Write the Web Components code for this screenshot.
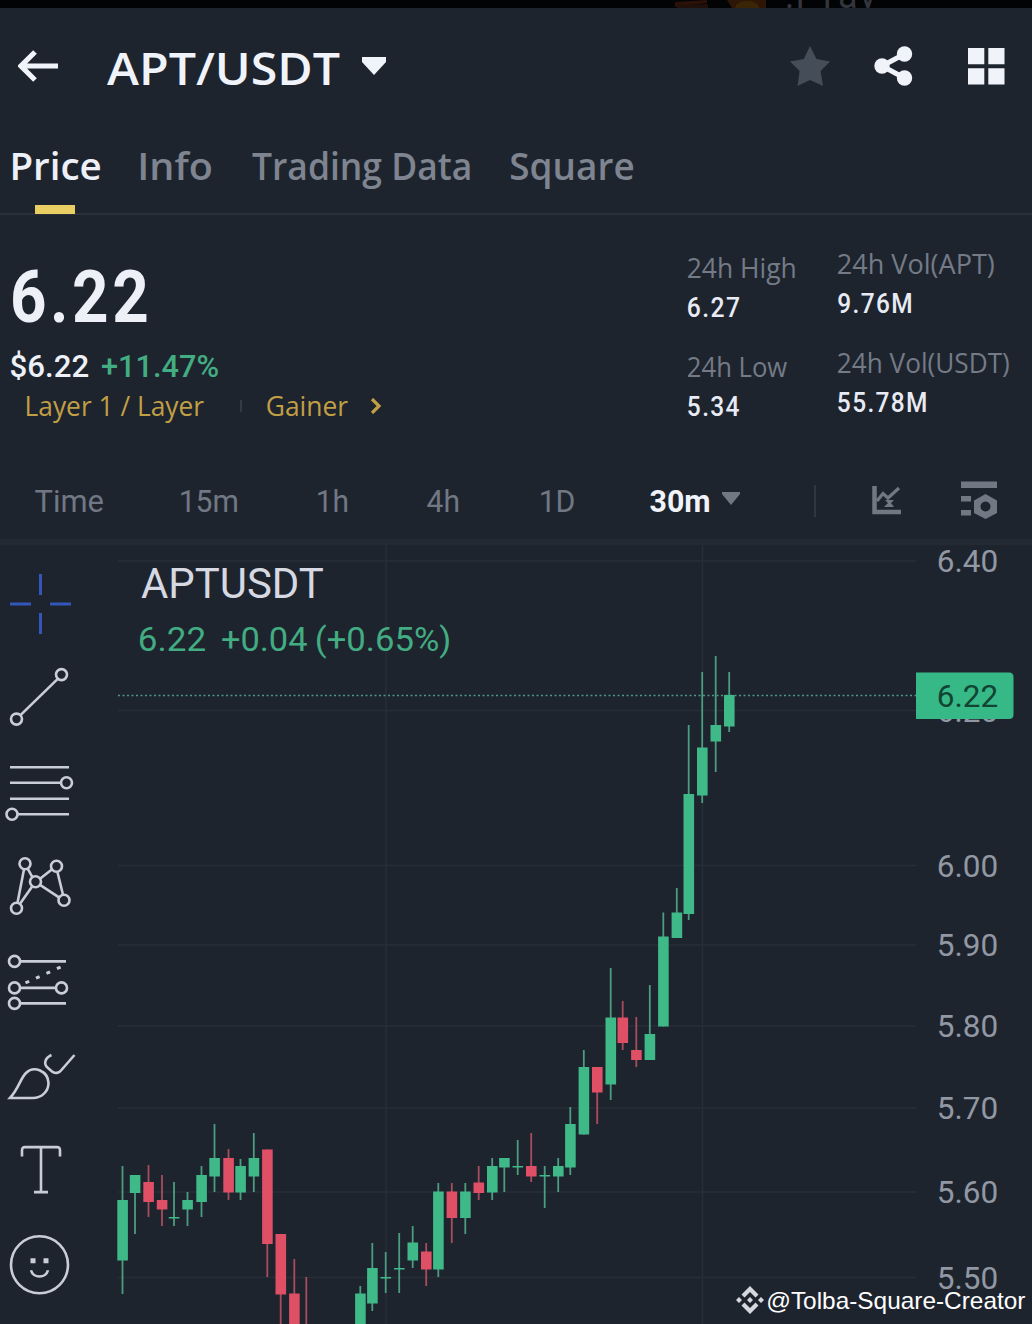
<!DOCTYPE html>
<html lang="en">
<head>
<meta charset="utf-8">
<title>APT/USDT</title>
<style>
body {
  margin: 0;
  background: #1e242e;
}
</style>
</head>
<body>
<market-page></market-page>

<script>
const measure = document.createElement('canvas').getContext('2d');

// Text whose drawn glyphs span exactly `width` pixels.
class FitText extends HTMLElement {
  constructor() {
    super();
    this.root = this.attachShadow({ mode: 'open' });
    this.root.innerHTML = `<style>
    :host { display: flex; flex: none; }
    span { flex: none; white-space: nowrap; transform-origin: 0 50%; }
    </style><span><slot></slot></span>`;
  }

  connectedCallback() {
    const width = Number(this.getAttribute('width'));
    const style = getComputedStyle(this);
    // Measured at ten times the size, since glyph bounds come back in whole pixels.
    measure.font = `${style.fontWeight} ${parseFloat(style.fontSize) * 10}px ${style.fontFamily}`;
    measure.letterSpacing = (parseFloat(style.letterSpacing) || 0) * 10 + 'px';
    const box = measure.measureText(this.textContent);
    const left = box.actualBoundingBoxLeft / 10;
    const scale = width / (left + box.actualBoundingBoxRight / 10);
    this.style.width = width + 'px';
    this.root.querySelector('span').style.transform = `translateX(${left * scale}px) scaleX(${scale})`;
  }
}

class StatusStrip extends HTMLElement {
  constructor() {
    super();
    this.attachShadow({ mode: 'open' }).innerHTML = `
    <style>
    :host { display: flex; height: 8px; overflow: hidden; background: #020305; color: #33363c;
      font: 36px/40px Roboto, sans-serif; letter-spacing: 2px; }
    svg { flex: none; margin-left: 672px; width: 98px; height: 8px; }
    .text { margin: -24px 0 0 15px; display: flex; gap: 10px; }
    </style>
    <svg viewBox="0 0 98 8">
      <path d="M3 2L35 0V3L3 7z" fill="#2b1108"/><path d="M5 8V5L36 4V8z" fill="#211009"/>
      <path d="M55 0H94V8H60z" fill="#2d1605"/><ellipse cx="75" cy="8" rx="12" ry="7" fill="#3a2507"/>
    </svg>
    <div class="text"><span>:l</span><span>Tay</span></div>`;
  }
}

class MarketHeader extends HTMLElement {
  constructor() {
    super();
    this.attachShadow({ mode: 'open' }).innerHTML = `
    <style>
    :host { display: flex; align-items: center; height: 116px; padding: 0 27px 0 18px; color: #f1f3fb;
      font: 600 46px/60px "Open Sans", sans-serif; }
    svg { flex: none; display: block; fill: currentColor; }
    fit-text { margin: 1px 21px 0 49px; }
    .star { margin-left: auto; color: #454d58; }
    .share { margin: 0 55px 0 44px; }
    </style>
    <svg width="40" height="32" viewBox="0 0 40 32"><path d="M17 2L3 16L17 30M3 16H40" fill="none" stroke="currentColor" stroke-width="5.2"/></svg>
    <fit-text width="233">APT/USDT</fit-text>
    <svg width="26" height="20" viewBox="0 0 26 20"><path d="M1 1H25V6L13 19L1 6z"/></svg>
    <svg class="star" width="40" height="42" viewBox="0 0 40 42"><path d="M20 1L26.5 14L40 16.4L30.6 26L33 41L20 35L7.5 41L9.6 26L0 16.4L13.8 14z"/></svg>
    <svg class="share" width="39" height="42" viewBox="0 0 39 42">
      <circle cx="8" cy="21" r="7.7"/><circle cx="30.5" cy="9" r="7.7"/><circle cx="30.5" cy="33" r="7.7"/>
      <path d="M30.5 9L8 21L30.5 33" fill="none" stroke="currentColor" stroke-width="5"/>
    </svg>
    <svg width="37" height="37" viewBox="0 0 37 37"><path d="M0 0H16.3V16.3H0zM20.3 0H36.5V16.3H20.3zM0 20.3H16.3V36.5H0zM20.3 20.3H36.5V36.5H20.3z"/></svg>`;
  }
}

class MarketTabs extends HTMLElement {
  constructor() {
    super();
    this.attachShadow({ mode: 'open' }).innerHTML = `
    <style>
    :host { display: flex; gap: 41px; height: 89px; padding-left: 13px; border-bottom: 2px solid #29303a;
      color: #7e8590; font: 600 37.5px/83px "Open Sans", sans-serif; }
    .active { color: #eef0f8; }
    .active i { display: block; width: 40px; height: 9px; margin: -2px 0 0 22px; background: #e9cf63; }
    </style>
    <div class="active"><fit-text width="87">Price</fit-text><i></i></div>
    <fit-text width="70">Info</fit-text>
    <fit-text width="218">Trading Data</fit-text>
    <fit-text width="122">Square</fit-text>`;
  }
}

class MarketStat extends HTMLElement {
  constructor() {
    super();
    this.attachShadow({ mode: 'open' }).innerHTML = `
    <style>
    :host { display: block; color: #747b87; font: 400 27px/40px "Open Sans", sans-serif; }
    ::slotted([slot=value]) { margin-top: 1px; color: #e8ebf3; font: 500 27px/38px Roboto, sans-serif; letter-spacing: 1.5px; }
    </style>
    <slot></slot><slot name="value"></slot>`;
  }
}

class PriceSummary extends HTMLElement {
  constructor() {
    super();
    this.attachShadow({ mode: 'open' }).innerHTML = `
    <style>
    :host { display: flex; justify-content: space-between; height: 248px; color: #eef0f8;
      font: 500 31px/38px Roboto, sans-serif; }
    .left { padding: 45px 0 0 11px; }
    .price { margin: 0 0 14px 2px; font-size: 73px; line-height: 74px; font-weight: 700; letter-spacing: 4px; }
    .row { display: flex; align-items: center; }
    .change { margin-left: 14px; color: #42ac82; }
    .tags { padding-left: 16px; color: #c19f45; font: 400 27px/40px "Open Sans", sans-serif; }
    .tags i { width: 2px; height: 12px; margin: 0 25px 0 36px; background: #343b46; }
    svg { margin: 0 0 0 22px; }
    .stats { display: flex; width: 344px; padding-top: 29px; }
    .col { display: grid; gap: 20px; align-content: start; width: 150px; padding-top: 4px; }
    .col + .col { padding-top: 0; }
    </style>
    <div class="left">
      <fit-text class="price" width="134">6.22</fit-text>
      <div class="row">
        <fit-text width="77">$6.22</fit-text>
        <fit-text class="change" width="116">+11.47%</fit-text>
      </div>
      <div class="row tags">
        <fit-text width="177">Layer 1 / Layer</fit-text><i></i>
        <fit-text width="81">Gainer</fit-text>
        <svg width="12" height="16" viewBox="0 0 12 16"><path d="M2 1L9 8L2 15" fill="none" stroke="currentColor" stroke-width="3.2"/></svg>
      </div>
    </div>
    <div class="stats">
      <div class="col">
        <market-stat><fit-text width="107">24h High</fit-text><fit-text slot="value" width="51">6.27</fit-text></market-stat>
        <market-stat><fit-text width="99">24h Low</fit-text><fit-text slot="value" width="51">5.34</fit-text></market-stat>
      </div>
      <div class="col">
        <market-stat><fit-text width="156">24h Vol(APT)</fit-text><fit-text slot="value" width="73">9.76M</fit-text></market-stat>
        <market-stat><fit-text width="171">24h Vol(USDT)</fit-text><fit-text slot="value" width="88">55.78M</fit-text></market-stat>
      </div>
    </div>`;
  }
}

class IntervalBar extends HTMLElement {
  constructor() {
    super();
    this.attachShadow({ mode: 'open' }).innerHTML = `
    <style>
    :host { display: flex; align-items: center; height: 76px; padding-left: 35px; color: #717884;
      border-bottom: 6px solid #232a34; font: 400 31px/76px Roboto, sans-serif; }
    fit-text { margin-top: 2px; }
    .active { color: #f1f3fa; font-weight: 700; margin-left: 76px; }
    svg { flex: none; fill: currentColor; }
    i { width: 2px; height: 32px; margin: 0 56px 0 74px; background: #303741; }
    </style>
    <fit-text width="68">Time</fit-text>
    <fit-text width="56" style="margin-left: 78px">15m</fit-text>
    <fit-text width="29" style="margin-left: 81px">1h</fit-text>
    <fit-text width="31" style="margin-left: 80px">4h</fit-text>
    <fit-text width="33" style="margin-left: 83px">1D</fit-text>
    <fit-text class="active" width="59">30m</fit-text>
    <svg width="18" height="13" viewBox="0 0 18 13" style="margin: -5px 0 0 13px"><path d="M0 0H18V2L9 13L0 2z"/></svg>
    <i></i>
    <svg width="30" height="30" viewBox="0 0 30 30">
      <path d="M2.5 0V26H29" fill="none" stroke="currentColor" stroke-width="4.5"/>
      <path d="M5 15L11 7.500L16 12L27 2" fill="none" stroke="currentColor" stroke-width="3.2"/>
      <path d="M13 14H22L19 17L22 21H12L16 17z"/>
    </svg>
    <svg width="38" height="40" viewBox="0 0 38 40" style="margin: -2px 0 0 58px">
      <path d="M1 1.500H37V8H1zM1 16H11V21.500H1zM1 30H11V35.500H1z"/>
      <path fill-rule="evenodd" d="M25.500 14L37 20.500V33L25.500 39L14 33V20.500zM25.500 21.500a5 5 0 1 0 .01 0z"/>
    </svg>`;
  }
}

// Each tool is 94.4px high; the drawings share one coordinate column.
const TOOLS = [
  '<path stroke="#3357b8" stroke-width="3" d="M40.500 574V595M40.500 613V634M10 604H31M50 604H71"/>',
  '<path d="M20.500 715.500L58 679"/><circle cx="61.500" cy="675" r="5.500"/><circle cx="16.500" cy="719.500" r="5.500"/>',
  '<path d="M10 767H69M10 782.500H61M10 798.500H69M17 814H69"/><circle cx="66.500" cy="782.500" r="5.500"/><circle cx="12" cy="814" r="5.500"/>',
  '<path d="M24 869.500L17.500 903M27.500 868.500L32.500 877.500M40 879L51.500 870M40 885L59 897.500M57.500 872.500L63 895M32 887L20 904"/><circle cx="25" cy="864" r="5.500"/><circle cx="56.500" cy="866.500" r="5.500"/><circle cx="35.500" cy="882" r="5.500"/><circle cx="64" cy="900.500" r="5.500"/><circle cx="16.500" cy="908.500" r="5.500"/>',
  '<path d="M20 961H66M20 987.500H55M20 1003H66"/><circle cx="14.500" cy="961" r="5.500"/><circle cx="14.500" cy="987.500" r="5.500"/><circle cx="61.500" cy="987.500" r="5.500"/><circle cx="14.500" cy="1003" r="5.500"/><path stroke-width="3" stroke-dasharray="4 7.500" d="M25.500 982.500L62 966"/>',
  '<path d="M10 1098C19 1088 20 1079 26 1073C34 1065 48 1071 48.500 1083C48.500 1092 41 1098 33 1098zM51.500 1055C45 1058 43 1064 48 1068L52 1071.500C55 1074 59 1073 61 1070.500L74.500 1055"/>',
  '<path d="M22 1157V1151C22 1148 23 1147.500 25 1147.500H57C59 1147.500 60 1148 60 1151V1157M41 1148V1192M34 1192.500H48"/>',
  '<circle cx="39.500" cy="1264.500" r="28.500"/><path d="M31 1270C33 1278.500 46 1278.500 48 1270"/><path stroke="none" fill="currentColor" d="M30.500 1258h5v5h-5zM43.500 1258h5v5h-5z"/>'
];

class DrawTools extends HTMLElement {
  constructor() {
    super();
    this.attachShadow({ mode: 'open' }).innerHTML = `
    <style>
    :host { display: flex; flex-direction: column; flex: none; width: 110px; padding-top: 12px; color: #c9cdd7; }
    svg { flex: none; width: 84px; height: 94.4px; overflow: visible; fill: none; stroke: currentColor; stroke-width: 2.6; }
    </style>
    ${TOOLS.map((art, i) => `<svg viewBox="0 ${557 + i * 94.4} 84 94.4">${art}</svg>`).join('')}`;
  }
}

// [centre, high, body top, body bottom, low, falling]
const CANDLES = [
  [122.5, 1166, 1200, 1260.5, 1294, 0], [135, 1175, 1175, 1193, 1234, 0], [148.5, 1165, 1182, 1202, 1217, 1],
  [162, 1175, 1200, 1209.5, 1226, 1], [174, 1182, 1217, 1218.5, 1226, 0], [187.5, 1192, 1200, 1209.5, 1226, 0],
  [201.5, 1166, 1175, 1202, 1217, 0], [214.5, 1124, 1158, 1176.5, 1192, 0], [228.5, 1149, 1158, 1192.5, 1200, 1],
  [240.5, 1159, 1166, 1192.5, 1200, 0], [253.8, 1133, 1158, 1176.5, 1192, 0], [267.3, 1149.5, 1149.5, 1244, 1277, 1],
  [280.7, 1234, 1234, 1294.5, 1324, 1], [294.3, 1259, 1293.5, 1324, 1324, 1], [306.3, 1277, 1324, 1324, 1324, 1],
  [360.3, 1286, 1293.5, 1324, 1324, 0], [372.3, 1243, 1268, 1303.5, 1311, 0], [385.7, 1252, 1277, 1278.5, 1293, 0],
  [399.2, 1233, 1268, 1269.5, 1293, 0], [412.7, 1226, 1242.5, 1260.5, 1268, 0], [426.2, 1243, 1251.5, 1269.5, 1286, 1],
  [438.3, 1183, 1191.5, 1269.5, 1277, 0], [451.8, 1183, 1191.5, 1218, 1243, 1], [465.3, 1183, 1191.5, 1218, 1234, 0],
  [478.7, 1166, 1182.5, 1193, 1200, 1], [492.2, 1158, 1166, 1192.5, 1200, 0], [504.3, 1158, 1158, 1167.5, 1192, 0],
  [517.7, 1140, 1166, 1167.5, 1175, 0], [531.2, 1133, 1166, 1176.5, 1182, 1], [544.7, 1166, 1175, 1176.5, 1208, 0],
  [558.2, 1158, 1166, 1176.5, 1192, 0], [570.3, 1107, 1124, 1167.5, 1175, 0], [583.8, 1050, 1067, 1134.5, 1134.5, 0],
  [597.2, 1067, 1067, 1092.5, 1124, 1], [610.7, 968, 1017.5, 1084.5, 1100, 0], [622.7, 1001, 1017.5, 1043, 1050, 1],
  [636.3, 1017, 1050, 1060, 1067, 1], [649.8, 985, 1034, 1060, 1060, 0], [663.3, 912.5, 936.5, 1026.5, 1026.5, 0],
  [676.8, 888, 912.5, 938, 938, 0], [688.7, 725, 794, 914, 920, 0], [702.2, 672, 747.5, 795.5, 803, 0],
  [715.7, 656, 725, 741.5, 772, 0], [729.2, 672, 695, 726.5, 732, 0]
];

const LEVELS = [
  [561, '6.40'], [710.5, '6.20'], [865.5, '6.00'], [945, '5.90'],
  [1026, '5.80'], [1108, '5.70'], [1192, '5.60'], [1277.5, '5.50']
];

class CandleChart extends HTMLElement {
  constructor() {
    super();
    this.attachShadow({ mode: 'open' }).innerHTML = `
    <style>
    :host { display: block; position: relative; flex: 1; color: #42ac82; font: 400 33.5px/44px Roboto, sans-serif; }
    svg { display: block; font-size: 31.5px; }
    .legend { position: absolute; left: 30px; top: 10px; }
    .name { color: #d6d9e2; font-size: 42.5px; line-height: 57px; margin-left: 1px; }
    .change { display: flex; padding-top: 6px; }
    </style>
    <svg width="922" height="779" viewBox="110 545 922 779">
      <g stroke="#272e38" stroke-width="1.5">
        <path d="M386 545V1324M702.5 545V1324"/>
        ${LEVELS.map(([y]) => `<path d="M118 ${y}H916"/>`).join('')}
      </g>
      <g fill="#9298a3" text-anchor="middle">
        ${LEVELS.map(([y, label]) => `<text x="967.500" y="${y + 11}">${label}</text>`).join('')}
      </g>
      <path d="M118 695.500H916" stroke="#4d9882" stroke-width="1.3" stroke-dasharray="2 2.500"/>
      ${CANDLES.map(c => this._candle(c)).join('')}
      <path d="M916 672.500H1009Q1013.500 672.500 1013.500 677V714.500Q1013.500 719 1009 719H916z" fill="#36b987"/>
      <text x="967.500" y="707" text-anchor="middle" fill="#124434">6.22</text>
    </svg>
    <div class="legend">
      <fit-text class="name" width="182">APTUSDT</fit-text>
      <div class="change">
        <fit-text width="65">6.22</fit-text>
        <fit-text width="85" style="margin-left: 17px">+0.04</fit-text>
        <fit-text width="132" style="margin-left: 10px">(+0.65%)</fit-text>
      </div>
    </div>`;
  }

  _candle([x, high, top, bottom, low, falling]) {
    return `<path d="M${x} ${high}V${low}" stroke="${falling ? '#a84d5e' : '#4b9d80'}" stroke-width="1.8"/>
      <path d="M${x - 5.2} ${top}H${x + 5.4}V${bottom}H${x - 5.2}z" fill="${falling ? '#df4f65' : '#3fb988'}"/>`;
  }
}

class CreatorMark extends HTMLElement {
  constructor() {
    super();
    this.attachShadow({ mode: 'open' }).innerHTML = `
    <style>
    :host { display: flex; align-items: center; gap: 4px; color: #fff; font: 24px/30px "Liberation Sans", Arial, sans-serif; }
    fit-text { margin-top: 2px; }
    </style>
    <svg width="28" height="28" viewBox="0 0 28 28" fill="#d5d8df">
      <path d="M14 0L22.500 8.500L19.500 11.500L14 6L8.500 11.500L5.500 8.500z"/>
      <path d="M14 28L22.500 19.500L19.500 16.500L14 22L8.500 16.500L5.500 19.500z"/>
      <path d="M0 14L3 11L6 14L3 17zM11 14L14 11L17 14L14 17zM22 14L25 11L28 14L25 17z"/>
    </svg>
    <fit-text width="257">@Tolba-Square-Creator</fit-text>`;
  }
}

class MarketPage extends HTMLElement {
  constructor() {
    super();
    this.attachShadow({ mode: 'open' }).innerHTML = `
    <style>
    :host { display: block; position: relative; width: 1032px; height: 1324px; overflow: hidden; background: #1e242e; }
    main { display: flex; }
    creator-mark { position: absolute; right: 7px; bottom: 8px; }
    </style>
    <status-strip></status-strip>
    <market-header></market-header>
    <market-tabs></market-tabs>
    <price-summary></price-summary>
    <interval-bar></interval-bar>
    <main>
      <draw-tools></draw-tools>
      <candle-chart></candle-chart>
    </main>
    <creator-mark></creator-mark>`;
  }
}

customElements.define('fit-text', FitText);
customElements.define('status-strip', StatusStrip);
customElements.define('market-header', MarketHeader);
customElements.define('market-tabs', MarketTabs);
customElements.define('market-stat', MarketStat);
customElements.define('price-summary', PriceSummary);
customElements.define('interval-bar', IntervalBar);
customElements.define('draw-tools', DrawTools);
customElements.define('candle-chart', CandleChart);
customElements.define('creator-mark', CreatorMark);
customElements.define('market-page', MarketPage);
</script>
</body>
</html>
